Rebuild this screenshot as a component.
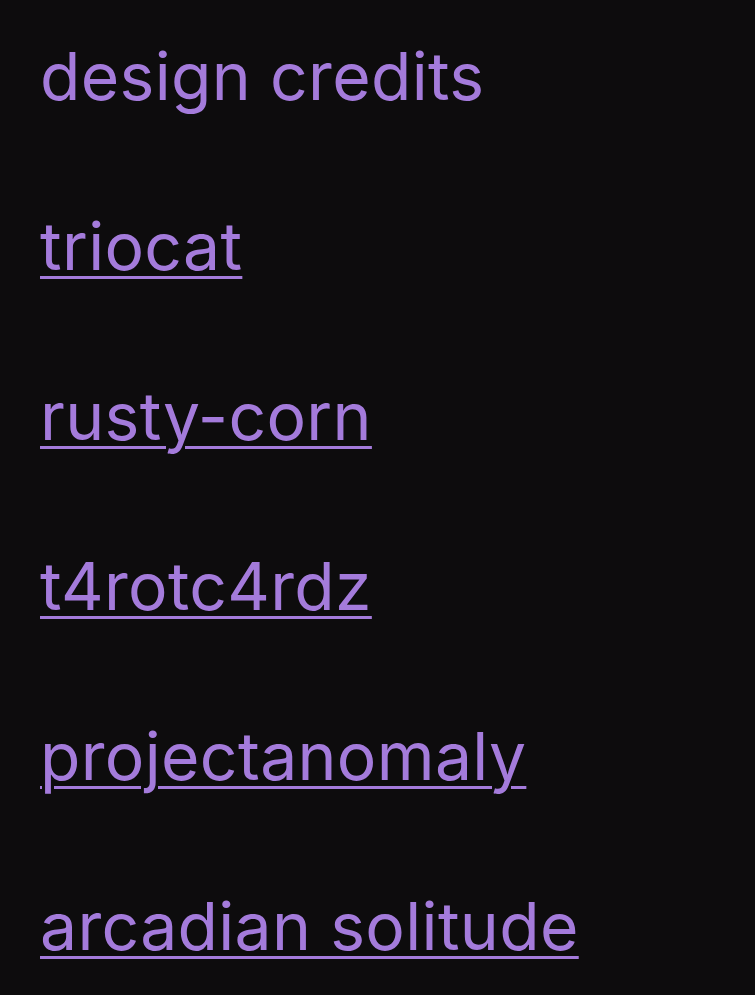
export default function App() {
    const credits = ['triocat', 'rusty-corn', 't4rotc4rdz', 'projectanomaly', 'arcadian solitude'];

    return (
        <div className="w-[755px] h-[1004px] bg-[#0d0c0d] overflow-hidden pl-[40px] -mt-[9px] text-[#a47bdb] text-[66px] leading-[170px] tracking-[0.005em]" style={{ fontFamily: 'Inter, "Noto Sans", sans-serif' }}>
            <p>design credits</p>
            {credits.map((name) => (
                <p key={name}>
                    <a href="#" className="underline decoration-[3px] underline-offset-[6px]">{name}</a>
                </p>
            ))}
        </div>
    );
}
